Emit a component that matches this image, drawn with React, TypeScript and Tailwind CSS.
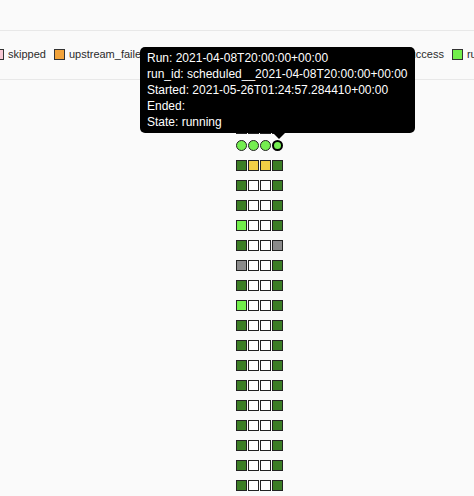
import React from 'react';

type Cell = 'success' | 'running' | 'retry' | 'none' | 'gray';

const CELL_BG: Record<Cell, string> = {
  success: 'bg-[#3b7d25]',
  running: 'bg-[#72ef4b]',
  retry: 'bg-[#f2cf45]',
  none: 'bg-white',
  gray: 'bg-[#8a8a8a]',
};

// the middle of the legend sits under the tooltip, so only a spacer is kept there
const LEGEND_LEFT = [
  { label: 'skipped', color: 'bg-[#f7c8d4]' },
  { label: 'upstream_failed', color: 'bg-[#f2a33a]' },
];

const LEGEND_RIGHT = [
  { label: 'success', color: 'bg-[#3b7d25]' },
  { label: 'running', color: 'bg-[#72ef4b]' },
];

const ROWS: Cell[][] = [
  ['success', 'retry', 'retry', 'success'],
  ['success', 'none', 'none', 'success'],
  ['success', 'none', 'none', 'success'],
  ['running', 'none', 'none', 'success'],
  ['success', 'none', 'none', 'gray'],
  ['gray', 'none', 'none', 'success'],
  ['success', 'none', 'none', 'success'],
  ['running', 'none', 'none', 'success'],
  ...Array.from({ length: 9 }, (): Cell[] => ['success', 'none', 'none', 'success']),
];

function Square({ cell }: { cell: Cell }) {
  return <span className={`block h-[11px] w-[11px] border border-[#222] ${CELL_BG[cell]}`} />;
}

function LegendItem({ label, color }: { label: string; color: string }) {
  return (
    <div className="mr-[8px] flex shrink-0 items-center gap-[4px]">
      <span className={`block h-[11px] w-[11px] border border-[#333] ${color}`} />
      <span>{label}</span>
    </div>
  );
}

function Tooltip() {
  return (
    <div className="absolute left-[140px] top-[47px] z-10 w-[275px] rounded-[5px] bg-black px-[7px] py-[3px] text-[12px] leading-4 text-white">
      <div>Run: 2021-04-08T20:00:00+00:00</div>
      <div>run_id: scheduled__2021-04-08T20:00:00+00:00</div>
      <div>Started: 2021-05-26T01:24:57.284410+00:00</div>
      <div>Ended:</div>
      <div>State: running</div>
      <span className="absolute left-[133px] top-full h-0 w-0 border-l-[6px] border-r-[6px] border-t-[6px] border-l-transparent border-r-transparent border-t-black" />
    </div>
  );
}

export default function App() {
  return (
    <div
      className="relative h-[496px] w-[474px] overflow-hidden bg-[#fafafa] text-[#2b2b2b]"
      style={{ fontFamily: '"Liberation Sans", Arial, sans-serif' }}
    >
      <div className="h-[31px] border-b border-[#e8e8e8]" />

      <div className="flex h-[49px] items-center whitespace-nowrap border-b border-[#e8e8e8] pb-[2px] text-[11px]">
        <div className="-ml-[7px] flex items-center">
          {LEGEND_LEFT.map((item) => (
            <LegendItem key={item.label} {...item} />
          ))}
          <div className="w-[234px] shrink-0" />
          {LEGEND_RIGHT.map((item) => (
            <LegendItem key={item.label} {...item} />
          ))}
        </div>
      </div>

      <div className="ml-[236px] flex flex-col pt-[43px]">
        <div className="flex gap-[1px]">
          {[0, 1, 2, 3].map((i) => (
            <Square key={i} cell="none" />
          ))}
        </div>
        <div className="mt-[6px] flex gap-[1px]">
          {[0, 1, 2, 3].map((i) => (
            <span
              key={i}
              className={`block h-[11px] w-[11px] rounded-full bg-[#74ee50] ${
                i === 3 ? 'border-2 border-black' : 'border-[1.5px] border-[#222]'
              }`}
            />
          ))}
        </div>
        <div className="mt-[9px] flex flex-col gap-[9px]">
          {ROWS.map((row, r) => (
            <div key={r} className="flex gap-[1px]">
              {row.map((cell, c) => (
                <Square key={c} cell={cell} />
              ))}
            </div>
          ))}
        </div>
      </div>

      <Tooltip />
    </div>
  );
}
